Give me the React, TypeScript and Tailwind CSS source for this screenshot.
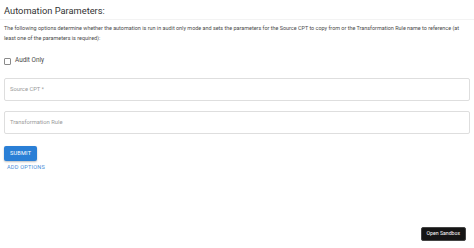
import React from "react";

export default function App() {
  return (
    <div className="relative w-[474px] h-[248px] bg-white font-['Roboto','Liberation_Sans',sans-serif] text-[#2a2a2a] overflow-hidden">
      <div className="pt-[4px]">
        <h2 className="px-[4px] text-[9.3px] leading-[13px] font-normal text-[#333]">Automation Parameters:</h2>
        <div className="mt-[2px] h-px bg-[#f3f3f3]" />
        <div className="px-[4px]">
          <p className="mt-[4px] text-[5.45px] leading-[9.5px] text-[#4a4a4a]">
            <span className="whitespace-nowrap">
              The following options determine whether the automation is run in audit only mode and sets the parameters for the Source CPT to copy from or the Transformation Rule name to reference (at
            </span>
            <br />
            <span>least one of the parameters is required):</span>
          </p>

          <label className="mt-[14px] flex items-center gap-[4px] h-[8px]">
            <span className="w-[7px] h-[7px] border border-[#8a8a8a] rounded-[1px] bg-white" />
            <span className="text-[6.4px] text-[#4a4a4a]">Audit Only</span>
          </label>

          <div className="mt-[13px] flex flex-col gap-[10px] w-[466px]">
            <div className="h-[23px] border border-[#dedede] rounded-[2px] flex items-center px-[5px]">
              <span className="text-[5.8px] text-[#9a9a9a]">Source CPT *</span>
            </div>
            <div className="h-[23px] border border-[#dedede] rounded-[2px] flex items-center px-[5px]">
              <span className="text-[5.8px] text-[#9a9a9a]">Transformation Rule</span>
            </div>
          </div>

          <div className="mt-[12px] flex flex-col items-start">
            <button className="h-[15px] px-[6px] rounded-[2px] bg-[#2a7fd6] text-white text-[5.6px] font-normal tracking-[0.2px] shadow-[0_1px_2px_rgba(0,0,0,0.25)]">
              SUBMIT
            </button>
            <button className="mt-[1px] h-[10px] px-[3px] text-[#4a8fd8] text-[5.6px] font-normal tracking-[0.2px]">
              ADD OPTIONS
            </button>
          </div>
        </div>
      </div>

      <button className="absolute right-[8px] bottom-[7px] h-[14px] px-[5px] bg-[#151515] border border-[#444] rounded-[2px] text-white text-[5.2px]">
        Open Sandbox
      </button>
    </div>
  );
}
